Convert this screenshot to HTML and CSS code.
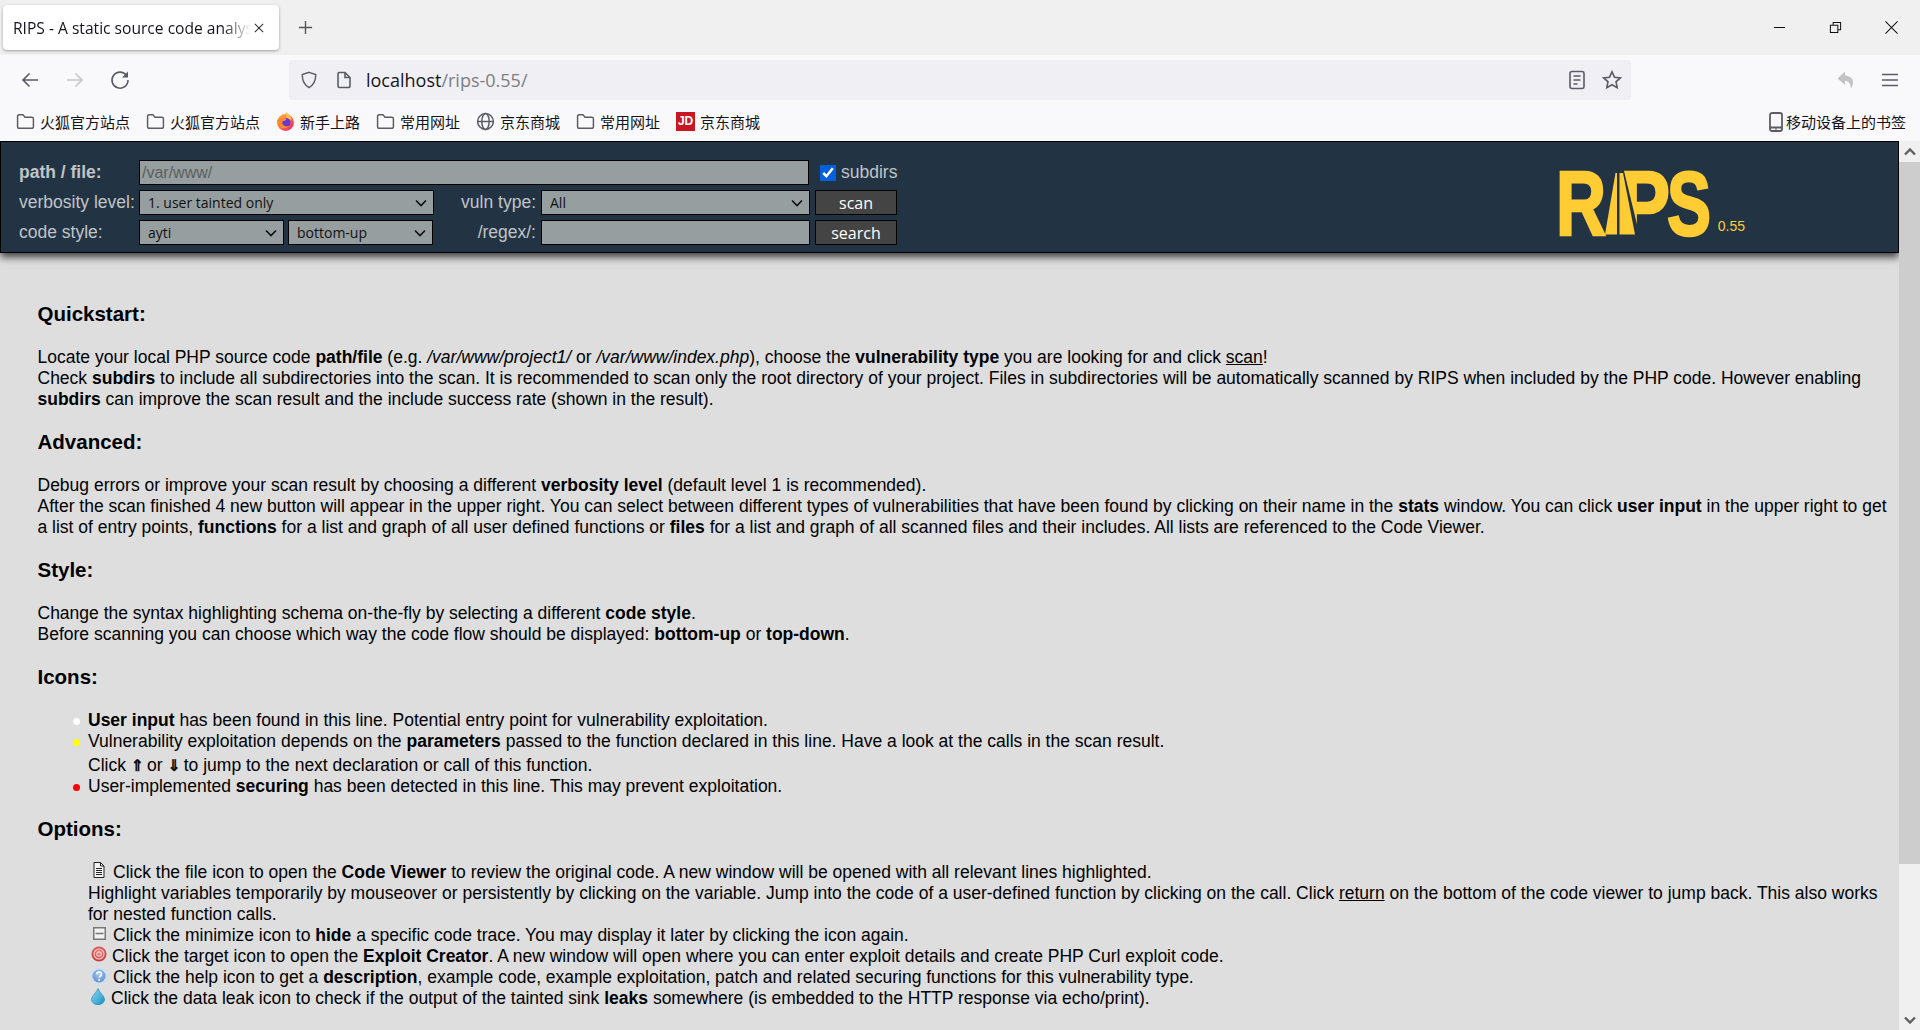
FILE: index.html
```html
<!DOCTYPE html>
<html lang="en">
<head>
<meta charset="utf-8">
<title>RIPS - A static source code analyser</title>
<link rel="stylesheet" href="styles.css">
</head>
<body>
<div class="browser">
  <div class="tabstrip">
    <div class="tab"><span class="tab-title">RIPS - A static source code analyser for vulnerabilities</span>
      <svg class="tab-close" viewBox="0 0 12 12"><path d="M1 1l10 10M11 1L1 11"/></svg>
    </div>
    <svg class="newtab" viewBox="0 0 16 16"><path d="M8 1v14M1 8h14"/></svg>
    <div class="winctl">
      <svg viewBox="0 0 14 14"><path d="M1 7h12"/></svg>
      <svg viewBox="0 0 14 14"><path d="M1.500 4.500h8v8h-8zM4.500 4.500v-3h8v8h-3"/></svg>
      <svg viewBox="0 0 14 14"><path d="M.5.5l13 13M13.500 .5l-13 13"/></svg>
    </div>
  </div>
  <div class="navbar">
    <div class="nav-left">
      <svg class="ico" viewBox="0 0 20 20"><path d="M18 10H3M9.500 3.500L3 10l6.500 6.500"/></svg>
      <svg class="ico dim" viewBox="0 0 20 20"><path d="M2 10h15M10.500 3.500L17 10l-6.500 6.500"/></svg>
      <svg class="ico" viewBox="0 0 20 20"><path d="M16.500 5.500A8 8 0 1 0 18 10"/><path class="fill" d="M18 1.500v6h-6z"/></svg>
    </div>
    <div class="urlbar">
      <svg class="ico shield" viewBox="0 0 20 20"><path d="M10 1.500l7.500 2.500c0 7-2 11.500-7.500 14.500C4.500 15.500 2.500 11 2.500 4z"/></svg>
      <svg class="ico pageicon" viewBox="0 0 16 18"><path d="M3 1.500h6l5 5V15a1.500 1.500 0 0 1-1.500 1.500h-9A1.500 1.500 0 0 1 2 15V3a1.500 1.500 0 0 1 1-1.500zM9 1.500v5h5"/></svg>
      <span class="url"><span class="url-host">localhost</span>/rips-0.55/</span>
      <svg class="ico reader" viewBox="0 0 18 20"><rect x="2" y="1.500" width="14" height="17" rx="2"/><path d="M5.500 6h7M5.500 10h7M5.500 14h4"/></svg>
      <svg class="ico star" viewBox="0 0 20 20"><path d="M10 1.800l2.500 5.400 5.800.7-4.300 4 1.200 5.800-5.200-3-5.200 3 1.200-5.800-4.300-4 5.800-.7z"/></svg>
    </div>
    <div class="nav-right">
      <svg class="undo" viewBox="0 0 18 20"><path d="M8 1.500L.5 8.500 8 15v-4c3.500 0 5.500 2 6 7.500 4-6 2.500-12.500-6-13z"/></svg>
      <svg class="ico menu" viewBox="0 0 16 14"><path d="M0 1.500h16M0 7h16M0 12.500h16"/></svg>
    </div>
  </div>
  <div class="bookmarks">
    <span class="bm"><svg class="folder" viewBox="0 0 18 18"><path d="M1.500 4a1.500 1.500 0 0 1 1.500-1.500h3.500L8.500 5H15a1.500 1.500 0 0 1 1.500 1.500V14a1.500 1.500 0 0 1-1.500 1.500H3A1.500 1.500 0 0 1 1.500 14z"/></svg>火狐官方站点</span>
    <span class="bm"><svg class="folder" viewBox="0 0 18 18"><path d="M1.500 4a1.500 1.500 0 0 1 1.500-1.500h3.500L8.500 5H15a1.500 1.500 0 0 1 1.500 1.500V14a1.500 1.500 0 0 1-1.500 1.500H3A1.500 1.500 0 0 1 1.500 14z"/></svg>火狐官方站点</span>
    <span class="bm"><svg class="bmicon" viewBox="0 0 18 18"><defs><linearGradient id="ff" x1="0" y1="0" x2="1" y2="1"><stop offset="0" stop-color="#ffbd4f"/><stop offset=".5" stop-color="#ff7139"/><stop offset="1" stop-color="#e31587"/></linearGradient></defs><circle cx="9" cy="10" r="8" fill="url(#ff)"/><path d="M9 0c3 2 5 4 6 7l-5 1z" fill="#ffbd4f"/><circle cx="9.500" cy="10" r="4.300" fill="#6a3ad0"/><path d="M1 8c2-3 5-3 8-2 2 1-1 3-3 3-1 3 3 6 7 4-3 4-11 3-12-5z" fill="#ff8a2b"/></svg>新手上路</span>
    <span class="bm"><svg class="folder" viewBox="0 0 18 18"><path d="M1.500 4a1.500 1.500 0 0 1 1.500-1.500h3.500L8.500 5H15a1.500 1.500 0 0 1 1.500 1.500V14a1.500 1.500 0 0 1-1.500 1.500H3A1.500 1.500 0 0 1 1.500 14z"/></svg>常用网址</span>
    <span class="bm"><svg class="folder" viewBox="0 0 18 18"><circle cx="9" cy="9" r="7.500"/><ellipse cx="9" cy="9" rx="3.500" ry="7.500"/><path d="M1.500 9h15"/></svg>京东商城</span>
    <span class="bm"><svg class="folder" viewBox="0 0 18 18"><path d="M1.500 4a1.500 1.500 0 0 1 1.500-1.500h3.500L8.500 5H15a1.500 1.500 0 0 1 1.500 1.500V14a1.500 1.500 0 0 1-1.500 1.500H3A1.500 1.500 0 0 1 1.500 14z"/></svg>常用网址</span>
    <span class="bm"><span class="jd">JD</span>京东商城</span>
    <span class="bm bm-mobile"><svg class="mobile" viewBox="0 0 14 20"><rect x="1" y="1" width="12" height="18" rx="2"/><path d="M1 15.500h12M6.500 17.300h1"/></svg>移动设备上的书签</span>
  </div>
  <div class="viewport">
    <main class="page">
      <header class="rips">
        <form class="controls">
          <label class="lbl strong">path / file:</label>
          <input class="field span3 path" type="text" value="/var/www/">
          <label class="subdirs"><input type="checkbox" checked>subdirs</label>

          <label class="lbl">verbosity level:</label>
          <div class="sel"><select><option>1. user tainted only</option></select><svg viewBox="0 0 12 8"><path d="M1 1.500l5 5 5-5"/></svg></div>
          <label class="lbl right">vuln type:</label>
          <div class="sel"><select><option>All</option></select><svg viewBox="0 0 12 8"><path d="M1 1.500l5 5 5-5"/></svg></div>
          <button class="btn" type="button">scan</button>

          <label class="lbl">code style:</label>
          <div class="pair">
            <div class="sel"><select><option>ayti</option></select><svg viewBox="0 0 12 8"><path d="M1 1.500l5 5 5-5"/></svg></div>
            <div class="sel"><select><option>bottom-up</option></select><svg viewBox="0 0 12 8"><path d="M1 1.500l5 5 5-5"/></svg></div>
          </div>
          <label class="lbl right">/regex/:</label>
          <input class="field" type="text">
          <button class="btn" type="button">search</button>
        </form>
        <div class="logo">
          <svg class="logo-mark" viewBox="0 0 156 66" role="img" aria-label="RIPS">
            <text class="logo-text" x="0" y="64" textLength="50" lengthAdjust="spacingAndGlyphs">R</text>
            <text class="logo-text" x="64" y="64" textLength="50" lengthAdjust="spacingAndGlyphs">P</text>
            <text class="logo-text" x="111" y="64" textLength="44" lengthAdjust="spacingAndGlyphs">S</text>
            <polygon class="logo-cut" points="55,0 68,0 84,66 55,66"/>
            <polygon class="logo-fill" points="59.500,2 61,2 61,63.500 49,63.500"/>
            <polygon class="logo-fill" points="63.500,2 67,2 79,63.500 63.500,63.500"/>
          </svg>
          <span class="logo-ver">0.55</span>
        </div>
      </header>
      <div class="content">
        <h3>Quickstart:</h3>
        <p>Locate your local PHP source code <b>path/file</b> (e.g. <i>/var/www/project1/</i> or <i>/var/www/index.php</i>), choose the <b>vulnerability type</b> you are looking for and click <u>scan</u>!<br>
        Check <b>subdirs</b> to include all subdirectories into the scan. It is recommended to scan only the root directory of your project. Files in subdirectories will be automatically scanned by RIPS when included by the PHP code. However enabling <b>subdirs</b> can improve the scan result and the include success rate (shown in the result).</p>
        <h3>Advanced:</h3>
        <p>Debug errors or improve your scan result by choosing a different <b>verbosity level</b> (default level 1 is recommended).<br>
        After the scan finished 4 new button will appear in the upper right. You can select between different types of vulnerabilities that have been found by clicking on their name in the <b>stats</b> window. You can click <b>user input</b> in the upper right to get a list of entry points, <b>functions</b> for a list and graph of all user defined functions or <b>files</b> for a list and graph of all scanned files and their includes. All lists are referenced to the Code Viewer.</p>
        <h3>Style:</h3>
        <p>Change the syntax highlighting schema on-the-fly by selecting a different <b>code style</b>.<br>
        Before scanning you can choose which way the code flow should be displayed: <b>bottom-up</b> or <b>top-down</b>.</p>
        <h3>Icons:</h3>
        <ul class="legend">
          <li class="white"><b>User input</b> has been found in this line. Potential entry point for vulnerability exploitation.</li>
          <li class="yellow">Vulnerability exploitation depends on the <b>parameters</b> passed to the function declared in this line. Have a look at the calls in the scan result.<br>
          <span class="clickline">Click <b class="arrow">⇑</b> or <b class="arrow">⇓</b> to jump to the next declaration or call of this function.</span></li>
          <li class="red">User-implemented <b>securing</b> has been detected in this line. This may prevent exploitation.</li>
        </ul>
        <h3>Options:</h3>
        <div class="options">
          <p><svg class="oi oi-file" viewBox="0 0 12 16"><path class="oi-paper" d="M1 .5h6.500L11 4v11.500H1z"/><path class="oi-line" d="M7.500 .5V4H11M3 6.500h6M3 8.500h6M3 10.500h6M3 12.500h6"/></svg>Click the file icon to open the <b>Code Viewer</b> to review the original code. A new window will be opened with all relevant lines highlighted.<br>
          Highlight variables temporarily by mouseover or persistently by clicking on the variable. Jump into the code of a user-defined function by clicking on the call. Click <u>return</u> on the bottom of the code viewer to jump back. This also works for nested function calls.</p>
          <p><svg class="oi oi-min" viewBox="0 0 13 13"><rect x=".75" y=".75" width="11.500" height="11.500" fill="#f2f2f2" stroke="#777" stroke-width="1.500"/><path d="M2.500 6.500h8" stroke="#777" stroke-width="1.500"/></svg>Click the minimize icon to <b>hide</b> a specific code trace. You may display it later by clicking the icon again.</p>
          <p><svg class="oi oi-target" viewBox="0 0 16 16"><defs><radialGradient id="tg" cx=".5" cy=".4" r=".6"><stop offset="0" stop-color="#f08a8a"/><stop offset="1" stop-color="#c93535"/></radialGradient></defs><circle cx="8" cy="8" r="7.500" fill="url(#tg)"/><circle cx="8" cy="8" r="5" fill="none" stroke="#f7c9c9" stroke-width="1.200"/><circle cx="8" cy="8" r="2.200" fill="none" stroke="#f7c9c9" stroke-width="1.200"/></svg>Click the target icon to open the <b>Exploit Creator</b>. A new window will open where you can enter exploit details and create PHP Curl exploit code.</p>
          <p><svg class="oi oi-help" viewBox="0 0 18 18"><defs><radialGradient id="hg" cx=".5" cy=".35" r=".7"><stop offset="0" stop-color="#a9c8ee"/><stop offset="1" stop-color="#5a8ccb"/></radialGradient></defs><circle cx="9" cy="9" r="8.500" fill="#cfdff2"/><circle cx="9" cy="9" r="6.500" fill="url(#hg)"/><path d="M6.800 7.200c0-3 4.600-3 4.600 0 0 1.800-2.200 1.800-2.200 3.400" fill="none" stroke="#fff" stroke-width="1.600"/><circle cx="9.200" cy="13" r="1" fill="#fff"/></svg>Click the help icon to get a <b>description</b>, example code, example exploitation, patch and related securing functions for this vulnerability type.</p>
          <p><svg class="oi oi-drop" viewBox="0 0 14 17"><defs><linearGradient id="dg" x1="0" y1="0" x2="1" y2="1"><stop offset="0" stop-color="#8fdcf5"/><stop offset="1" stop-color="#1690c4"/></linearGradient></defs><path d="M7 .5C8 4 13.500 8 13.500 11.500a6.500 5.200 0 0 1-13 0C.5 8 6 4 7 .5z" fill="url(#dg)" stroke="#1a7ea8" stroke-width=".6"/></svg>Click the data leak icon to check if the output of the tainted sink <b>leaks</b> somewhere (is embedded to the HTTP response via echo/print).</p>
        </div>
      </div>
    </main>
    <div class="scrollbar">
      <div class="sb-btn"><svg viewBox="0 0 12 8"><path d="M1 6.500l5-5 5 5"/></svg></div>
      <div class="sb-thumb"></div>
      <div class="sb-rest"></div>
      <div class="sb-btn"><svg viewBox="0 0 12 8"><path d="M1 1.500l5 5 5-5"/></svg></div>
    </div>
  </div>
</div>
</body>
</html>
```
FILE: styles.css
```css
* { box-sizing: border-box; }
html, body { margin: 0; height: 100%; overflow: hidden; }
body { font-family: "Liberation Sans", Arial, sans-serif; }
.browser { height: 1030px; display: flex; flex-direction: column; background: #f9f9fb; }
svg { display: block; flex: none; }

.tabstrip { height: 55px; background: #f0f0f0; display: flex; align-items: flex-start; padding: 5px 0 0 3px; }
.tab { width: 276px; height: 45px; background: #fff; border-radius: 4px; box-shadow: 0 1px 3px rgba(0,0,0,.35); display: flex; align-items: center; padding: 0 15px 0 10px; }
.tab-title { flex: 1; overflow: hidden; white-space: nowrap; font: 15.6px "Open Sans", sans-serif; color: #15141a; -webkit-mask-image: linear-gradient(to right, #000 88%, transparent 100%); mask-image: linear-gradient(to right, #000 88%, transparent 100%); }
.tab-close { width: 10px; height: 10px; margin-left: 3px; fill: none; stroke: #333; stroke-width: 1.300; }
.newtab { width: 15px; height: 15px; margin: 15px 0 0 19px; fill: none; stroke: #555; stroke-width: 1.500; }
.winctl { margin-left: auto; display: flex; gap: 43px; padding: 16px 22px 0 0; }
.winctl svg { width: 13px; height: 13px; fill: none; stroke: #111; stroke-width: 1.100; }

.navbar { height: 50px; display: flex; align-items: center; }
.ico { width: 20px; height: 20px; fill: none; stroke: #5b5b66; stroke-width: 1.600; }
.ico.dim { stroke: #c5c5cb; }
.ico .fill { fill: #5b5b66; stroke: none; }
.nav-left { width: 289px; display: flex; gap: 25px; padding-left: 20px; }
.urlbar { flex: 1; height: 40px; background: #f0f0f4; border-radius: 4px; display: flex; align-items: center; padding: 0 9px 0 11px; }
.shield { width: 18px; height: 20px; }
.pageicon { width: 16px; height: 18px; margin-left: 18px; }
.url { flex: 1; margin-left: 14px; font: 18px "Open Sans", sans-serif; color: #7d7d85; }
.url-host { color: #15141a; }
.reader { width: 18px; height: 20px; }
.star { margin-left: 16px; }
.nav-right { width: 289px; display: flex; align-items: center; gap: 27px; padding-left: 206px; }
.undo { width: 18px; height: 20px; fill: #c3c3c7; }
.menu { width: 16px; height: 14px; }

.bookmarks { height: 36px; display: flex; align-items: center; gap: 16px; padding: 0 14px 3px 16px; font: 15px "Noto Sans CJK SC", sans-serif; color: #15141a; }
.bm { display: flex; align-items: center; gap: 5px; white-space: nowrap; }
.folder { width: 19px; height: 19px; fill: none; stroke: #5b5b66; stroke-width: 1.400; }
.bmicon { width: 19px; height: 19px; }
.jd { width: 19px; height: 19px; background: #c91623; color: #fff; font: bold 12px/19px "Liberation Sans", sans-serif; text-align: center; }
.bm-mobile { margin-left: auto; gap: 3px; }
.mobile { width: 14px; height: 20px; fill: none; stroke: #5b5b66; stroke-width: 1.800; }

.viewport { height: 889px; display: flex; overflow: hidden; position: relative; }
.page { flex: 1; min-width: 0; background: #dedede; overflow: hidden; }
.rips { height: 112px; background: #223344; border: 1px solid #000; box-shadow: 0 4px 8px rgba(0,0,0,.75); display: flex; padding: 18px 0 0 18px; position: relative; }
.controls { display: grid; grid-template-columns: 120px 295px 107px 269px 88px; grid-template-rows: 25px 25px 25px; row-gap: 5px; align-items: center; }
.lbl { font-size: 17.5px; color: #c0c4c6; white-space: nowrap; }
.lbl.strong { font-weight: bold; }
.lbl.right { text-align: right; padding-right: 5px; }
.field { height: 25px; background: #969e9f; border: 1px solid #000; padding: 0 2px; font: 16px "Liberation Sans", sans-serif; color: #5c5f60; min-width: 0; width: 100%; outline: none; }
.span3 { grid-column: span 3; width: 670px; }
.subdirs { display: flex; align-items: center; gap: 5px; font-size: 17.5px; color: #c0c4c6; margin-left: 10px; white-space: nowrap; }
.subdirs input { width: 16px; height: 16px; margin: 0; accent-color: #0060df; }
.sel { position: relative; height: 25px; }
.sel select { appearance: none; -webkit-appearance: none; width: 100%; height: 25px; background: #969e9f; border: 1px solid #000; border-radius: 0; padding: 0 0 0 8px; font: 14px "Open Sans", sans-serif; color: #111; outline: none; }
.sel svg { position: absolute; right: 7px; top: 9px; width: 12px; height: 8px; fill: none; stroke: #111; stroke-width: 1.600; pointer-events: none; }
.pair { display: flex; gap: 4px; }
.pair .sel { width: 145px; }
.btn { width: 82px; height: 25px; justify-self: start; margin-left: 5px; background: #444; border: 1px solid #000; color: #fff; font: 16px "Open Sans", sans-serif; padding: 0; }
.logo { margin: 11px 0 0 auto; display: flex; align-items: flex-end; height: 66px; gap: 6px; padding-right: 153px; }
.logo-mark { width: 156px; height: 66px; overflow: visible; }
.logo-text { font: bold 90px "Liberation Sans", sans-serif; fill: #ffcc33; stroke: #ffcc33; stroke-width: 2.500; }
.logo-cut { fill: #223344; }
.logo-fill { fill: #ffcc33; }
.logo-ver { font-size: 14px; color: #ffcc33; margin-bottom: 3px; }

.content { padding: 49px 8px 0 37.5px; font-size: 17.5px; line-height: 21px; color: #000; }
h3 { font-size: 20.5px; line-height: 23px; margin: 20px 0 22px; }
.content > h3:first-child { margin-top: 0; }
p { margin: 0; }
.legend { list-style: none; margin: 0; padding: 0 0 0 50.5px; }
.legend li { position: relative; }
.legend li::before { content: ""; position: absolute; left: -15px; top: 8px; width: 7px; height: 7px; border-radius: 50%; }
.legend .white::before { background: #fff; }
.legend .yellow::before { background: #ff0; }
.legend .red::before { background: #f00; }
.clickline { display: inline-block; margin: 3px 0 0; }
.arrow { font-family: "DejaVu Sans", sans-serif; font-size: 16px; letter-spacing: -2px; -webkit-text-stroke: .3px #000; }
.options { padding-left: 50.5px; }
.oi { display: inline-block; vertical-align: top; }
.oi-file { width: 12px; height: 16px; margin: 0 8px 0 5px; }
.oi-paper { fill: #f4f4f4; stroke: #222; stroke-width: 1; }
.oi-line { fill: none; stroke: #222; stroke-width: 1; }
.oi-min { width: 13px; height: 13px; margin: 2px 7px 0 5px; }
.oi-target { width: 16px; height: 16px; margin: 0 5px 0 3px; }
.oi-help { width: 18px; height: 18px; margin: 0 5px 0 2px; }
.oi-drop { width: 14px; height: 17px; margin: 0 6px 0 3px; }

.scrollbar { width: 21px; display: flex; flex-direction: column; background: #f0f0f0; }
.sb-btn { height: 21px; display: flex; align-items: center; justify-content: center; flex: none; }
.sb-btn svg { width: 12px; height: 8px; fill: none; stroke: #606060; stroke-width: 2.400; }
.sb-thumb { height: 702px; background: #cdcdcd; flex: none; }
.sb-rest { flex: 1; }
```
